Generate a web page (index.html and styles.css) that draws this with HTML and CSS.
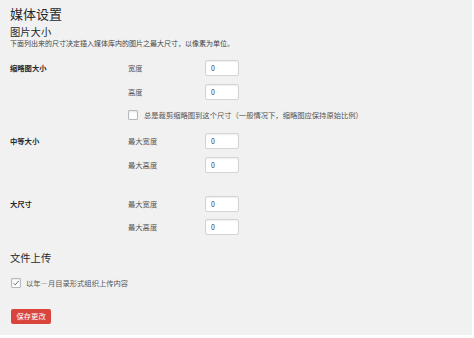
FILE: index.html
```html
<!DOCTYPE html>
<html lang="zh-CN">

<head>
    <meta charset="UTF-8">
    <meta name="viewport" content="width=device-width, initial-scale=1.0">
    <title>媒体设置</title>
    <link rel="stylesheet" href="styles.css">
</head>

<body>
    <div class="wrap">
        <h1>媒体设置</h1>

        <h2>图片大小</h2>
        <p class="desc">下面列出来的尺寸决定插入媒体库内的图片之最大尺寸，以像素为单位。</p>

        <!-- 缩略图 -->
        <div class="section section-thumb">
            <div class="section-title">缩略图大小</div>
            <div class="fields">
                <div class="field">
                    <label class="field-label">宽度</label>
                    <input class="small-text" type="text" value="0">
                </div>
                <div class="field">
                    <label class="field-label">高度</label>
                    <input class="small-text" type="text" value="0">
                </div>
                <div class="field check-row">
                    <span class="checkbox"></span>
                    <span>总是裁剪缩略图到这个尺寸（一般情况下，缩略图应保持原始比例）</span>
                </div>
            </div>
        </div>

        <!-- 中等 -->
        <div class="section section-medium">
            <div class="section-title">中等大小</div>
            <div class="fields">
                <div class="field">
                    <label class="field-label">最大宽度</label>
                    <input class="small-text" type="text" value="0">
                </div>
                <div class="field">
                    <label class="field-label">最大高度</label>
                    <input class="small-text" type="text" value="0">
                </div>
            </div>
        </div>

        <!-- 大 -->
        <div class="section section-large">
            <div class="section-title">大尺寸</div>
            <div class="fields">
                <div class="field">
                    <label class="field-label">最大宽度</label>
                    <input class="small-text" type="text" value="0">
                </div>
                <div class="field">
                    <label class="field-label">最大高度</label>
                    <input class="small-text" type="text" value="0">
                </div>
            </div>
        </div>

        <h2 class="upload-title">文件上传</h2>

        <div class="check-row upload-row">
            <span class="checkbox">
                <svg viewBox="0 0 10 10" width="8" height="8">
                    <path d="M1.8 5.2 L4 7.3 L8.4 2.4" fill="none" stroke="#555d66" stroke-width="1.1"/>
                </svg>
            </span>
            <span>以年—月目录形式组织上传内容</span>
        </div>

        <button class="button-primary">保存更改</button>
    </div>
</body>

</html>
```

FILE: styles.css
```css
body {
    margin: 0;
    background-color: #fff;
    font-family: "Noto Sans CJK SC", "Noto Sans", sans-serif;
    color: #444;
}

.wrap {
    width: 472px;
    height: 335px;
    box-sizing: border-box;
    padding: 6px 0 0 10px;
    background-color: #f1f1f1;
}

h1 {
    margin: 0;
    font-size: 13px;
    line-height: 16px;
    font-weight: 400;
    color: #23282d;
}

h2 {
    margin: 3px 0 0 0;
    font-size: 10.3px;
    line-height: 13px;
    font-weight: 400;
    color: #23282d;
}

.desc {
    margin: 1px 0 0 0;
    font-size: 7px;
    line-height: 9px;
    color: #444;
}

.section {
    display: flex;
}

.section-thumb {
    margin-top: 12px;
}

.section-medium {
    margin-top: 10px;
}

.section-large {
    margin-top: 23px;
}

.section-title {
    width: 118px;
    font-size: 7.3px;
    line-height: 16px;
    font-weight: 700;
    color: #23282d;
}

.fields {
    display: flex;
    flex-direction: column;
    gap: 7.5px;
}

.field {
    display: flex;
    align-items: center;
    height: 16px;
    font-size: 7.3px;
}

.field-label {
    width: 77px;
    color: #555;
}

.small-text {
    width: 34px;
    height: 16px;
    box-sizing: border-box;
    margin: 0;
    padding: 0 5px;
    border: 1px solid #d4d4d4;
    border-radius: 2px;
    background-color: #fff;
    box-shadow: inset 0 1px 2px rgba(0, 0, 0, 0.07);
    font-family: inherit;
    font-size: 7px;
    color: #32373c;
}

.check-row {
    display: flex;
    align-items: center;
    font-size: 7.3px;
    color: #555;
}

.checkbox {
    display: inline-flex;
    align-items: center;
    justify-content: center;
    width: 8px;
    height: 8px;
    margin-right: 6px;
    border: 1px solid #b4b9be;
    border-radius: 1px;
    background-color: #fff;
    box-shadow: inset 0 1px 2px rgba(0, 0, 0, 0.1);
}

.upload-title {
    margin-top: 15.5px;
}

.upload-row {
    margin-top: 13px;
    height: 12px;
    padding-left: 1px;
}

.upload-row .checkbox {
    margin-right: 5px;
}

.button-primary {
    display: block;
    margin: 20.5px 0 0 1px;
    height: 15px;
    padding: 0 5.5px;
    border: none;
    border-radius: 2px;
    background-color: #d9443c;
    color: #fff;
    font-family: inherit;
    font-size: 7.3px;
    line-height: 15px;
}
```
